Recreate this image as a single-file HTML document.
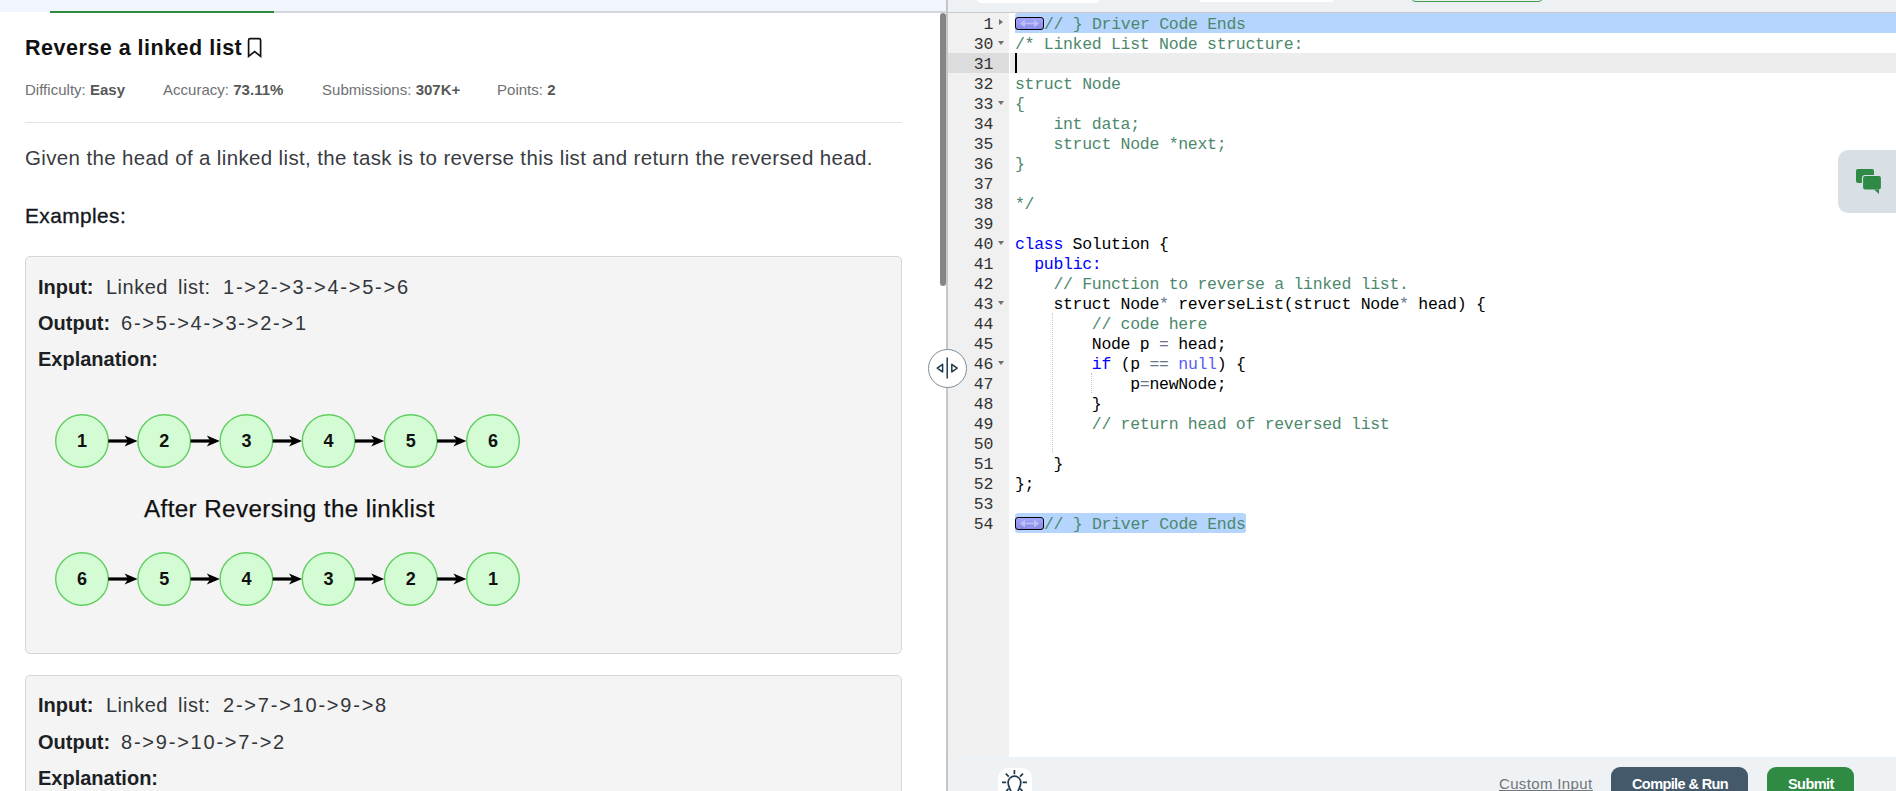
<!DOCTYPE html>
<html><head><meta charset="utf-8">
<style>
*{margin:0;padding:0;box-sizing:border-box}
html,body{width:1896px;height:791px;overflow:hidden;background:#fff;font-family:"Liberation Sans",sans-serif}
.a{position:absolute;white-space:pre;line-height:1}
#left{position:absolute;left:0;top:0;width:946px;height:791px;background:#fff;overflow:hidden}
#ltop{position:absolute;left:0;top:0;width:946px;height:12px;background:#f1f5fd}
#ltopline{position:absolute;left:274px;top:11px;width:672px;height:2px;background:#d3d6dc}
#lgreen{position:absolute;left:50px;top:11px;width:224px;height:2px;background:#2f8a3e}
.title{font-weight:bold;font-size:21.5px;letter-spacing:0.5px;color:#111;left:25px}
.meta{font-size:15px;color:#6e7073;letter-spacing:0.02px}
.meta b{color:#585858}
.hr{position:absolute;left:25px;top:122px;width:877px;height:1px;background:#e2e2e2}
.desc{font-size:20.5px;color:#393c42;left:25px;letter-spacing:0.36px}
.ex{font-size:20.8px;color:#15181d;left:25px;letter-spacing:0.45px;-webkit-text-stroke:0.35px #15181d}
.box{position:absolute;left:25px;width:877px;background:#f4f4f4;border:1px solid #d4d6da;border-radius:5px}
.lb{font-size:20px;font-weight:bold;color:#1c1f24}
.tx{font-size:20px;color:#33363a;letter-spacing:0.5px}
.num{font-size:20px;color:#33363a;letter-spacing:1.78px}
#thumb{position:absolute;left:940px;top:13px;width:6px;height:273px;background:#858585;border-radius:3px}
#divider{position:absolute;left:946px;top:0;width:2px;height:791px;background:#c6c6c6}
#handle{position:absolute;left:928px;top:349px;width:39px;height:39px;border-radius:50%;background:#fff;border:1.3px solid #7f8e98}
#right{position:absolute;left:948px;top:0;width:948px;height:791px;background:#fff;overflow:hidden}
#rtop{position:absolute;left:0;top:0;width:948px;height:13px;background:#eef1f4;border-bottom:1px solid #c9c9c9}
.tb{position:absolute;top:-10px;height:13px;background:#fff;border-radius:6px}
#gutter{position:absolute;left:0;top:13px;width:61px;height:744px;background:#f0f0f0}
#gact{position:absolute;left:0;top:53px;width:61px;height:20px;background:#dcdcdc}
#lact{position:absolute;left:62px;top:53px;width:886px;height:20px;background:#ededed}
#sel1{position:absolute;left:67px;top:13px;width:881px;height:20px;background:#b5d5ff;border-top-left-radius:3px}
#sel2{position:absolute;left:67px;top:513px;width:231px;height:20px;background:#b5d5ff;border-radius:3px}
#cursor{position:absolute;left:67px;top:53px;width:2px;height:20px;background:#000}
.ig{position:absolute;width:1px;border-left:1px dotted #c4c4c4}
#bottom{position:absolute;left:0;top:757px;width:948px;height:34px;background:#eef2f5}
.ln{position:absolute;left:0;width:45px;text-align:right;font-family:"Liberation Mono",monospace;font-size:16.5px;letter-spacing:-0.3px;line-height:20px;color:#333;padding-top:1.6px}
.fr{position:absolute;left:51px;width:0;height:0;border-top:3px solid transparent;border-bottom:3px solid transparent;border-left:4px solid #707070}
.fd{position:absolute;left:50px;width:0;height:0;border-left:3px solid transparent;border-right:3px solid transparent;border-top:4px solid #707070}
.code{position:absolute;left:67px;font-family:"Liberation Mono",monospace;font-size:16.5px;letter-spacing:-0.3px;line-height:20px;color:#000;white-space:pre;padding-top:1.6px}
.cm{color:#4c886b}
.kw{color:#0000ff}
.op{color:#687687}
.cl{color:#585cf6}
.ph{display:inline-block;vertical-align:top;margin-top:2px;width:29px;height:13px;background:linear-gradient(#a2a5fc,#888ce4);border:1px solid #000;border-radius:3px;line-height:0;position:relative}
.ph svg{position:absolute;left:-1px;top:-1px}
#chat{position:absolute;left:890px;top:150px;width:70px;height:63px;background:#d8e0e6;border-radius:10px}
.btn{position:absolute;top:767px;height:40px;border-radius:9px;color:#fff;font-weight:bold;font-size:14px}
</style></head><body>
<div id="left">
  <div id="ltop"></div>
  <div id="ltopline"></div>
  <div id="lgreen"></div>
  <div class="a title" style="top:38px">Reverse a linked list</div>
  <svg style="position:absolute;left:246px;top:37px" width="18" height="21" viewBox="0 0 18 21"><path d="M2.6 19.3V3.2Q2.6 1.6 4.2 1.6H13Q14.6 1.6 14.6 3.2V19.3L8.6 14.5Z" fill="none" stroke="#111" stroke-width="1.7" stroke-linejoin="miter"/></svg>
  <div class="a meta" style="top:81.6px;left:25px">Difficulty: <b>Easy</b></div>
  <div class="a meta" style="top:81.6px;left:163px">Accuracy: <b>73.11%</b></div>
  <div class="a meta" style="top:81.6px;left:322px">Submissions: <b>307K+</b></div>
  <div class="a meta" style="top:81.6px;left:497px">Points: <b>2</b></div>
  <div class="hr"></div>
  <div class="a desc" style="top:148px">Given the head of a linked list, the task is to reverse this list and return the reversed head.</div>
  <div class="a ex" style="top:205.5px">Examples:</div>
  <div class="box" style="top:256px;height:398px"></div>
  <div class="a lb" style="left:38px;top:277px">Input:</div>
  <div class="a tx" style="left:106px;top:277px">Linked</div>
  <div class="a tx" style="left:178px;top:277px">list:</div>
  <div class="a num" style="left:223px;top:277px">1-&gt;2-&gt;3-&gt;4-&gt;5-&gt;6</div>
  <div class="a lb" style="left:38px;top:313px">Output:</div>
  <div class="a num" style="left:121px;top:313px">6-&gt;5-&gt;4-&gt;3-&gt;2-&gt;1</div>
  <div class="a lb" style="left:38px;top:349px">Explanation:</div>
  <svg style="position:absolute;left:0;top:380px" width="600" height="260" viewBox="0 380 600 260"><circle cx="82.0" cy="441" r="26.3" fill="#d4fcd4" stroke="#5fce5f" stroke-width="1.4"/><text x="82.0" y="447" text-anchor="middle" font-family="Liberation Sans" font-weight="bold" font-size="18" fill="#111">1</text><path d="M108.3 441H129.6" stroke="#000" stroke-width="3.2"/><path d="M137.6 441L124.6 435.5L128.1 441L124.6 446.5z" fill="#000"/><circle cx="164.2" cy="441" r="26.3" fill="#d4fcd4" stroke="#5fce5f" stroke-width="1.4"/><text x="164.2" y="447" text-anchor="middle" font-family="Liberation Sans" font-weight="bold" font-size="18" fill="#111">2</text><path d="M190.5 441H211.8" stroke="#000" stroke-width="3.2"/><path d="M219.8 441L206.8 435.5L210.3 441L206.8 446.5z" fill="#000"/><circle cx="246.4" cy="441" r="26.3" fill="#d4fcd4" stroke="#5fce5f" stroke-width="1.4"/><text x="246.4" y="447" text-anchor="middle" font-family="Liberation Sans" font-weight="bold" font-size="18" fill="#111">3</text><path d="M272.7 441H294.0" stroke="#000" stroke-width="3.2"/><path d="M302.0 441L289.0 435.5L292.5 441L289.0 446.5z" fill="#000"/><circle cx="328.6" cy="441" r="26.3" fill="#d4fcd4" stroke="#5fce5f" stroke-width="1.4"/><text x="328.6" y="447" text-anchor="middle" font-family="Liberation Sans" font-weight="bold" font-size="18" fill="#111">4</text><path d="M354.9 441H376.2" stroke="#000" stroke-width="3.2"/><path d="M384.2 441L371.2 435.5L374.7 441L371.2 446.5z" fill="#000"/><circle cx="410.8" cy="441" r="26.3" fill="#d4fcd4" stroke="#5fce5f" stroke-width="1.4"/><text x="410.8" y="447" text-anchor="middle" font-family="Liberation Sans" font-weight="bold" font-size="18" fill="#111">5</text><path d="M437.1 441H458.4" stroke="#000" stroke-width="3.2"/><path d="M466.4 441L453.4 435.5L456.9 441L453.4 446.5z" fill="#000"/><circle cx="493.0" cy="441" r="26.3" fill="#d4fcd4" stroke="#5fce5f" stroke-width="1.4"/><text x="493.0" y="447" text-anchor="middle" font-family="Liberation Sans" font-weight="bold" font-size="18" fill="#111">6</text><circle cx="82.0" cy="579" r="26.3" fill="#d4fcd4" stroke="#5fce5f" stroke-width="1.4"/><text x="82.0" y="585" text-anchor="middle" font-family="Liberation Sans" font-weight="bold" font-size="18" fill="#111">6</text><path d="M108.3 579H129.6" stroke="#000" stroke-width="3.2"/><path d="M137.6 579L124.6 573.5L128.1 579L124.6 584.5z" fill="#000"/><circle cx="164.2" cy="579" r="26.3" fill="#d4fcd4" stroke="#5fce5f" stroke-width="1.4"/><text x="164.2" y="585" text-anchor="middle" font-family="Liberation Sans" font-weight="bold" font-size="18" fill="#111">5</text><path d="M190.5 579H211.8" stroke="#000" stroke-width="3.2"/><path d="M219.8 579L206.8 573.5L210.3 579L206.8 584.5z" fill="#000"/><circle cx="246.4" cy="579" r="26.3" fill="#d4fcd4" stroke="#5fce5f" stroke-width="1.4"/><text x="246.4" y="585" text-anchor="middle" font-family="Liberation Sans" font-weight="bold" font-size="18" fill="#111">4</text><path d="M272.7 579H294.0" stroke="#000" stroke-width="3.2"/><path d="M302.0 579L289.0 573.5L292.5 579L289.0 584.5z" fill="#000"/><circle cx="328.6" cy="579" r="26.3" fill="#d4fcd4" stroke="#5fce5f" stroke-width="1.4"/><text x="328.6" y="585" text-anchor="middle" font-family="Liberation Sans" font-weight="bold" font-size="18" fill="#111">3</text><path d="M354.9 579H376.2" stroke="#000" stroke-width="3.2"/><path d="M384.2 579L371.2 573.5L374.7 579L371.2 584.5z" fill="#000"/><circle cx="410.8" cy="579" r="26.3" fill="#d4fcd4" stroke="#5fce5f" stroke-width="1.4"/><text x="410.8" y="585" text-anchor="middle" font-family="Liberation Sans" font-weight="bold" font-size="18" fill="#111">2</text><path d="M437.1 579H458.4" stroke="#000" stroke-width="3.2"/><path d="M466.4 579L453.4 573.5L456.9 579L453.4 584.5z" fill="#000"/><circle cx="493.0" cy="579" r="26.3" fill="#d4fcd4" stroke="#5fce5f" stroke-width="1.4"/><text x="493.0" y="585" text-anchor="middle" font-family="Liberation Sans" font-weight="bold" font-size="18" fill="#111">1</text></svg><div class="a" style="left:144px;top:497px;font-size:24.2px;color:#111;letter-spacing:0.4px;-webkit-text-stroke:0.25px #111">After Reversing the linklist</div>
  <div class="box" style="top:675px;height:200px"></div>
  <div class="a lb" style="left:38px;top:695px">Input:</div>
  <div class="a tx" style="left:106px;top:695px">Linked</div>
  <div class="a tx" style="left:178px;top:695px">list:</div>
  <div class="a num" style="left:223px;top:695px">2-&gt;7-&gt;10-&gt;9-&gt;8</div>
  <div class="a lb" style="left:38px;top:732px">Output:</div>
  <div class="a num" style="left:121px;top:732px">8-&gt;9-&gt;10-&gt;7-&gt;2</div>
  <div class="a lb" style="left:38px;top:768px">Explanation:</div>
  <div id="thumb"></div>
</div>
<div id="divider"></div>
<div id="right">
  <div id="rtop"></div>
  <div class="tb" style="left:28px;width:124px"></div>
  <div class="tb" style="left:252px;width:133px;border-radius:0;top:-11px"></div>
  <div class="tb" style="left:462px;width:134px;background:transparent;border:1.5px solid #3a9a4a;top:-11.5px"></div>
  <div id="gutter"></div>
  <div id="gact"></div>
  <div id="lact"></div>
  <div id="sel1"></div>
  <div id="sel2"></div>
  <div class="ig" style="left:104px;top:313px;height:140px"></div>
  <div class="ig" style="left:143px;top:373px;height:20px"></div>
  <div class="ln" style="top:13px">1</div>
<div class="fr" style="top:19px"></div>
<div class="ln" style="top:33px">30</div>
<div class="fd" style="top:41px"></div>
<div class="ln act" style="top:53px">31</div>
<div class="ln" style="top:73px">32</div>
<div class="ln" style="top:93px">33</div>
<div class="fd" style="top:101px"></div>
<div class="ln" style="top:113px">34</div>
<div class="ln" style="top:133px">35</div>
<div class="ln" style="top:153px">36</div>
<div class="ln" style="top:173px">37</div>
<div class="ln" style="top:193px">38</div>
<div class="ln" style="top:213px">39</div>
<div class="ln" style="top:233px">40</div>
<div class="fd" style="top:241px"></div>
<div class="ln" style="top:253px">41</div>
<div class="ln" style="top:273px">42</div>
<div class="ln" style="top:293px">43</div>
<div class="fd" style="top:301px"></div>
<div class="ln" style="top:313px">44</div>
<div class="ln" style="top:333px">45</div>
<div class="ln" style="top:353px">46</div>
<div class="fd" style="top:361px"></div>
<div class="ln" style="top:373px">47</div>
<div class="ln" style="top:393px">48</div>
<div class="ln" style="top:413px">49</div>
<div class="ln" style="top:433px">50</div>
<div class="ln" style="top:453px">51</div>
<div class="ln" style="top:473px">52</div>
<div class="ln" style="top:493px">53</div>
<div class="ln" style="top:513px">54</div>
<div class="code" style="top:13px"><span class="ph"><svg width="29" height="13" viewBox="0 0 29 13"><path d="M9 6.5h11" stroke="#bcbef4" stroke-width="1.6"/><path d="M5 6.5L10 2.6V10.4z M24 6.5L19 2.6V10.4z" fill="#bcbef4"/><path d="M12.5 10.6h1M14.5 10.6h1M16.5 10.6h1" stroke="#a9acf0" stroke-width="1"/></svg></span><span class="cm">// } Driver Code Ends</span></div>
<div class="code" style="top:33px"><span class="cm">/* Linked List Node structure:</span></div>
<div class="code" style="top:53px"></div>
<div class="code" style="top:73px"><span class="cm">struct Node</span></div>
<div class="code" style="top:93px"><span class="cm">{</span></div>
<div class="code" style="top:113px"><span class="cm">    int data;</span></div>
<div class="code" style="top:133px"><span class="cm">    struct Node *next;</span></div>
<div class="code" style="top:153px"><span class="cm">}</span></div>
<div class="code" style="top:173px"></div>
<div class="code" style="top:193px"><span class="cm">*/</span></div>
<div class="code" style="top:213px"></div>
<div class="code" style="top:233px"><span class="kw">class</span> Solution {</div>
<div class="code" style="top:253px">  <span class="kw">public:</span></div>
<div class="code" style="top:273px"><span class="cm">    // Function to reverse a linked list.</span></div>
<div class="code" style="top:293px">    struct Node<span class="op">*</span> reverseList(struct Node<span class="op">*</span> head) {</div>
<div class="code" style="top:313px"><span class="cm">        // code here</span></div>
<div class="code" style="top:333px">        Node p <span class="op">=</span> head;</div>
<div class="code" style="top:353px">        <span class="kw">if</span> (p <span class="op">==</span> <span class="cl">null</span>) {</div>
<div class="code" style="top:373px">            p<span class="op">=</span>newNode;</div>
<div class="code" style="top:393px">        }</div>
<div class="code" style="top:413px"><span class="cm">        // return head of reversed list</span></div>
<div class="code" style="top:433px"></div>
<div class="code" style="top:453px">    }</div>
<div class="code" style="top:473px">};</div>
<div class="code" style="top:493px"></div>
<div class="code" style="top:513px"><span class="ph"><svg width="29" height="13" viewBox="0 0 29 13"><path d="M9 6.5h11" stroke="#bcbef4" stroke-width="1.6"/><path d="M5 6.5L10 2.6V10.4z M24 6.5L19 2.6V10.4z" fill="#bcbef4"/><path d="M12.5 10.6h1M14.5 10.6h1M16.5 10.6h1" stroke="#a9acf0" stroke-width="1"/></svg></span><span class="cm">// } Driver Code Ends</span></div>
  <div id="cursor"></div>
  <div id="chat"><svg style="position:absolute;left:18px;top:19px" width="27" height="26" viewBox="0 0 27 26"><rect x="0" y="0" width="18" height="14" rx="2" fill="#2f8a46"/><rect x="6.5" y="6.5" width="19" height="14.5" rx="2.5" fill="#2f8a46" stroke="#d8e0e6" stroke-width="1.2"/><path d="M18 20.5l5 4.5v-4.5z" fill="#2f8a46"/></svg></div>
  <div id="bottom"></div>
  <div style="position:absolute;left:50px;top:768px;width:34px;height:40px;background:#fff;border-radius:10px"></div>
  <svg style="position:absolute;left:52px;top:768px" width="30" height="23" viewBox="1000 768 30 23"><g stroke="#1f3b4b" stroke-width="1.7" fill="none"><path d="M1014.4 770V774.2M1005.8 773.6L1008.8 776.6M1023 773.6L1020 776.6M1002 782.4H1006.2M1022.7 782.4H1026.9M1006 791.5L1008.6 788.6M1022.8 791.5L1020.2 788.6"/><path d="M1011 791.5C1010 788.6 1008.1 786.6 1008.1 782.5A6.35 6.35 0 0 1 1020.8 782.5C1020.8 786.6 1018.9 788.6 1017.9 791.5"/></g></svg>
  <div class="a" style="left:551px;top:776px;font-size:15px;color:#717479;letter-spacing:0.35px">Custom Input</div><div style="position:absolute;left:551px;top:790px;width:94px;height:1px;background:#74777c"></div>
  <div class="btn" style="left:663px;width:137px;background:#44596a"></div>
  <div class="a" style="left:684px;top:777px;font-size:14.5px;font-weight:bold;color:#fff;letter-spacing:-0.6px">Compile &amp; Run</div>
  <div class="btn" style="left:819px;width:87px;background:#2f8a44"></div>
  <div class="a" style="left:840px;top:777px;font-size:14.5px;font-weight:bold;color:#fff;letter-spacing:-0.55px">Submit</div>
</div>
<div id="handle"><svg style="position:absolute;left:6px;top:6px" width="26" height="26" viewBox="0 0 26 26"><path d="M12.2 1.6V22.6" stroke="#1f3b4b" stroke-width="1.5"/><path d="M7.6 8.3L2.2 12.1L7.6 15.9Z M16.8 8.3L22.2 12.1L16.8 15.9Z" fill="none" stroke="#1f3b4b" stroke-width="1.5" stroke-linejoin="round"/></svg></div>
</body></html>
